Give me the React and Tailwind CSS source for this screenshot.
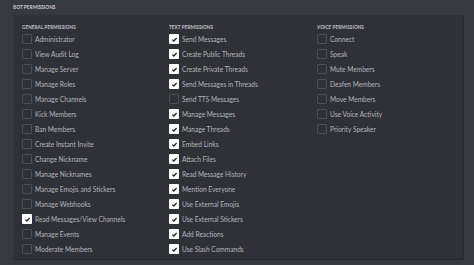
import React from 'react';

const general = [
    ['Administrator', false],
    ['View Audit Log', false],
    ['Manage Server', false],
    ['Manage Roles', false],
    ['Manage Channels', false],
    ['Kick Members', false],
    ['Ban Members', false],
    ['Create Instant Invite', false],
    ['Change Nickname', false],
    ['Manage Nicknames', false],
    ['Manage Emojis and Stickers', false],
    ['Manage Webhooks', false],
    ['Read Messages/View Channels', true],
    ['Manage Events', false],
    ['Moderate Members', false],
];

const text = [
    ['Send Messages', true],
    ['Create Public Threads', true],
    ['Create Private Threads', true],
    ['Send Messages in Threads', true],
    ['Send TTS Messages', false],
    ['Manage Messages', true],
    ['Manage Threads', true],
    ['Embed Links', true],
    ['Attach Files', true],
    ['Read Message History', true],
    ['Mention Everyone', true],
    ['Use External Emojis', true],
    ['Use External Stickers', true],
    ['Add Reactions', true],
    ['Use Slash Commands', true],
];

const voice = [
    ['Connect', false],
    ['Speak', false],
    ['Mute Members', false],
    ['Deafen Members', false],
    ['Move Members', false],
    ['Use Voice Activity', false],
    ['Priority Speaker', false],
];

const Check = ({checked}) => (
    checked ? (
        <span className="w-[10px] h-[10px] rounded-[1px] bg-white flex items-center justify-center shrink-0">
            <svg width="7" height="7" viewBox="0 0 10 10">
                <path d="M2 5.2 L4 7.2 L8 2.8" fill="none" stroke="#202225" strokeWidth="1.8"/>
            </svg>
        </span>
    ) : (
        <span className="w-[10px] h-[10px] rounded-[1px] border border-[#4a4e55] shrink-0"/>
    )
);

const Column = ({title, items}) => (
    <div className="flex flex-col">
        <div className="h-[8px] flex items-center text-[4.6px] font-bold tracking-[0.1px] text-[#c3c5c8] uppercase">{title}</div>
        <div className="flex flex-col gap-[5px] mt-[3px]">
            {items.map(([label, checked]) => (
                <div key={label} className="flex items-center h-[10px]">
                    <Check checked={checked}/>
                    <span className="ml-[3px] text-[6.6px] leading-none text-[#b3b6ba] whitespace-nowrap">{label}</span>
                </div>
            ))}
        </div>
    </div>
);

export default function App() {
    return (
        <div className="w-[474px] h-[265px] bg-[#36393f] overflow-hidden" style={{fontFamily: 'Lato, "Open Sans", sans-serif'}}>
            <div className="h-[15px] flex items-center pl-[13px] text-[4.8px] font-bold uppercase text-[#c8cacd]">Bot Permissions</div>
            <div className="ml-[13px] w-[451px] h-[245px] bg-[#2f3136] border-r border-b border-[#26282c] rounded-br-[2px] pl-[9px] pt-[8px] grid grid-cols-[147px_148px_1fr]">
                <Column title="General Permissions" items={general}/>
                <Column title="Text Permissions" items={text}/>
                <Column title="Voice Permissions" items={voice}/>
            </div>
        </div>
    );
}
